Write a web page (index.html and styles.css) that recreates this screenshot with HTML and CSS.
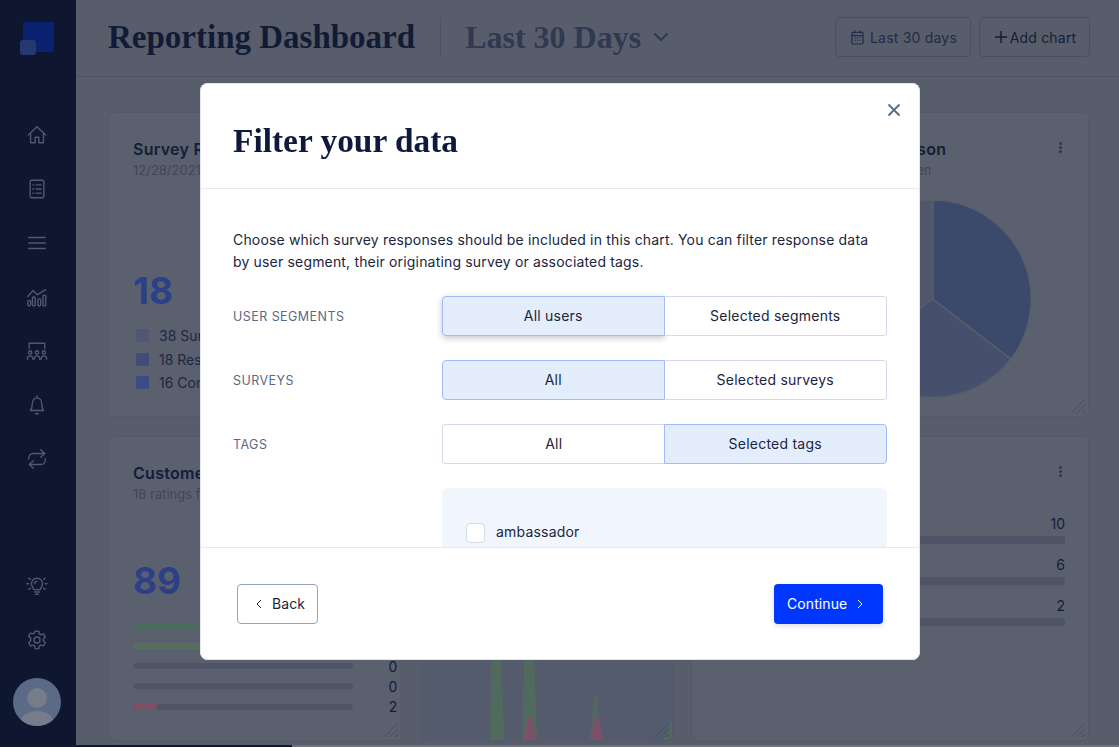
FILE: index.html
```html
<!DOCTYPE html>
<html lang="en">
<head>
  <meta charset="UTF-8" />
  <meta name="viewport" content="width=device-width, initial-scale=1.0" />
  <title>Reporting Dashboard</title>
  <link rel="stylesheet" href="styles.css">
</head>
<body>
  <div class="dashboard">
    <aside class="sidebar">
      <div class="logo"><span class="logo-big"></span><span class="logo-small"></span></div>
      <nav class="nav">
        <a href="#"><svg viewBox="0 0 24 24"><path d="M2.500 12 12 3l9.500 9M5 10v10.500h5v-6h4v6h5V10"/></svg></a>
        <a href="#"><svg viewBox="0 0 24 24"><rect x="4.500" y="2.500" width="15" height="19" rx="1.500"/><path d="M7.500 7.500h1M11 7.500h5.500M7.500 12h1M11 12h5.500M7.500 16.500h1M11 16.500h5.500"/></svg></a>
        <a href="#"><svg viewBox="0 0 24 24"><path d="M3 6h18M3 12h18M3 18h18"/></svg></a>
        <a href="#"><svg viewBox="0 0 24 24"><path d="M2 11.500 7.500 5l5 4.500L21.500 4"/><rect x="2" y="16" width="3" height="5.500" rx="1"/><rect x="7" y="12" width="3" height="9.500" rx="1"/><rect x="13" y="14" width="3" height="7.500" rx="1"/><rect x="18.500" y="10" width="3" height="11.500" rx="1"/></svg></a>
        <a href="#"><svg viewBox="0 0 24 24"><path d="M3.500 9V3.500h17V9"/><circle cx="4.500" cy="13.500" r="1.800"/><circle cx="12" cy="13.500" r="1.800"/><circle cx="19.500" cy="13.500" r="1.800"/><path d="M1.500 21c0-5 6-5 6 0M9 21c0-5 6-5 6 0M16.500 21c0-5 6-5 6 0"/></svg></a>
        <a href="#"><svg viewBox="0 0 24 24"><path d="M12 2v2M5 18c1.500-2 1.800-4 1.800-7 0-4 2.200-6.800 5.200-6.800s5.200 2.800 5.200 6.800c0 3 .3 5 1.800 7zM10.500 21.500h3"/></svg></a>
        <a href="#"><svg viewBox="0 0 24 24"><path d="M16 2l4.500 4L16 10M20 6H8a5 5 0 0 0-5 5v1M8 22l-4.500-4L8 14M4 18h12a5 5 0 0 0 5-5v-1"/></svg></a>
      </nav>
      <nav class="nav nav-bottom">
        <a href="#"><svg viewBox="0 0 24 24"><path d="M8.500 16c0-2-2.500-3-2.500-6.500a6 6 0 0 1 12 0C18 13 15.500 14 15.500 16zM9.500 18.500h5M10.500 21h3M9.500 9.500A2.500 2.500 0 0 1 12 7M1 9.500h2M21 9.500h2M3 3.500l1.800 1.200M21 3.500l-1.800 1.200M3 15.500l1.800-1.200M21 15.500l-1.800-1.200"/></svg></a>
        <a href="#"><svg viewBox="0 0 24 24"><circle cx="12" cy="12" r="3.300"/><path d="M10 2.500h4l.6 2.800 1.800 1 2.700-.9 2 3.400-2.100 1.900v2.400l2.100 1.900-2 3.400-2.700-.9-1.800 1-.6 2.900h-4l-.6-2.900-1.800-1-2.700.9-2-3.400 2.100-1.900V9.700L2.700 7.800l2-3.400 2.700.9 1.800-1z"/></svg></a>
      </nav>
      <div class="avatar"><span class="avatar-head"></span><span class="avatar-body"></span></div>
    </aside>

    <main class="main">
      <header class="topbar">
        <h1>Reporting Dashboard</h1>
        <div class="range-title">Last 30 Days <svg viewBox="0 0 16 10"><path d="M1.500 1.500 8 8l6.500-6.500"/></svg></div>
        <div class="top-actions">
          <button class="top-btn range-btn"><svg class="cal" viewBox="0 0 14 16"><rect x="1" y="2.500" width="12" height="12.500" rx="1.500"/><path d="M1 6h12M4 .5v3M10 .5v3M4 8.500h1M6.500 8.500h1M9 8.500h1M4 11h1M6.500 11h1M9 11h1"/></svg>Last 30 days</button>
          <button class="top-btn add-btn"><svg class="plus" viewBox="0 0 12 12"><path d="M6 0v12M0 6h12"/></svg>Add chart</button>
        </div>
      </header>

      <section class="cards">
        <div class="row row-top">
          <article class="card">
            <h3>Survey Responses</h3>
            <p class="sub">12/28/2021 - 1/27/2022</p>
            <div class="big big-18">18</div>
            <ul class="legend">
              <li><span class="sq sq-1"></span>38 Surveys sent</li>
              <li><span class="sq sq-2"></span>18 Responses</li>
              <li><span class="sq sq-3"></span>16 Completed</li>
            </ul>
            <span class="grip"></span>
          </article>
          <article class="card">
            <h3>Response Comparison</h3>
            <p class="sub">Responses by user chosen</p>
            <span class="kebab"></span>
            <svg class="pie" viewBox="0 0 200 200">
              <path class="slice-c" d="M100 100V1A99 99 0 0 0 19 157Z"/>
              <path class="slice-b" d="M100 100 178 160A99 99 0 0 1 19 157Z"/>
              <path class="slice-a" d="M100 100V1A99 99 0 0 1 178 160Z"/>
            </svg>
            <span class="grip"></span>
          </article>
        </div>
        <div class="row row-bottom">
          <article class="card">
            <h3>Customer Satisfaction</h3>
            <p class="sub">18 ratings from 16 users</p>
            <div class="big big-89">89</div>
            <div class="scores">
              <div class="score"><div class="track"><div class="fill fill-green" style="width:56%"></div></div><span>10</span></div>
              <div class="score"><div class="track"><div class="fill fill-olive" style="width:33%"></div></div><span>6</span></div>
              <div class="score"><div class="track"></div><span>0</span></div>
              <div class="score"><div class="track"></div><span>0</span></div>
              <div class="score"><div class="track"><div class="fill fill-red" style="width:11%"></div></div><span>2</span></div>
            </div>
            <span class="grip"></span>
          </article>
          <article class="card card-chart">
            <h3>Ratings over time</h3>
            <svg class="area" viewBox="0 0 253 305" preserveAspectRatio="none">
              <path class="peak-green" d="M69 305L71 224C73 150 74 100 76 100S79 150 81 224L84 305ZM102 305L104 224C106 150 107 100 109 100S112 150 114 224L117 305ZM169 305C173 295 174 257 176 257S179 295 184 305ZM244 305C247 300 249 295 253 282V305Z"/>
              <path class="peak-red" d="M102 305C106 300 106 281 110 281S114 300 118 305ZM169 305C173 300 173 281 177 281S181 300 185 305Z"/>
            </svg>
            <span class="grip"></span>
          </article>
          <article class="card card-tags">
            <h3>Top tags</h3>
            <p class="sub">18 responses</p>
            <span class="kebab"></span>
            <div class="tag-bars">
              <div class="tag-bar"><span>10</span><div class="tag-track"></div></div>
              <div class="tag-bar"><span>6</span><div class="tag-track"></div></div>
              <div class="tag-bar"><span>2</span><div class="tag-track"></div></div>
            </div>
            <span class="grip"></span>
          </article>
        </div>
      </section>
    </main>
  </div>
  <div class="scrollbar"><div class="scroll-thumb"></div></div>

  <div class="modal">
    <div class="modal-head">
      <h2>Filter your data</h2>
      <button class="close"><svg viewBox="0 0 14 14"><path d="M1.500 1.500l11 11M12.500 1.500l-11 11"/></svg></button>
    </div>
    <div class="modal-body">
      <p class="intro">Choose which survey responses should be included in this chart. You can filter response data by user segment, their originating survey or associated tags.</p>
      <div class="filter">
        <label>User segments</label>
        <div class="seg seg-shadow"><button class="active">All users</button><button>Selected segments</button></div>
      </div>
      <div class="filter">
        <label>Surveys</label>
        <div class="seg"><button class="active">All</button><button>Selected surveys</button></div>
      </div>
      <div class="filter">
        <label>Tags</label>
        <div class="seg seg-right"><button>All</button><button class="active">Selected tags</button></div>
      </div>
      <div class="tag-box">
        <div class="check"><span class="checkbox"></span><span class="check-label">ambassador</span></div>
      </div>
    </div>
    <div class="modal-foot">
      <button class="btn-back"><svg viewBox="0 0 6 10"><path d="M5 1 1 5l4 4"/></svg>Back</button>
      <button class="btn-next">Continue<svg viewBox="0 0 6 10"><path d="M1 1l4 4-4 4"/></svg></button>
    </div>
  </div>
</body>
</html>
```

FILE: styles.css
```css
* {
  box-sizing: border-box;
}
html, body {
  height: 100%;
}
body {
  margin: 0;
  font-family: Inter, 'Noto Sans', sans-serif;
  background-color: #575d6b;
  color: #141d38;
  overflow: hidden;
}
button {
  font-family: inherit;
}
.dashboard {
  display: flex;
  height: 745px;
}
.scrollbar {
  height: 2px;
  background-color: #6d727e;
}
.scroll-thumb {
  width: 292px;
  height: 2px;
  background-color: #12192c;
}

/* sidebar */
.sidebar {
  width: 76px;
  flex: none;
  padding-right: 2px;
  background-color: #0f1730;
  display: flex;
  flex-direction: column;
  align-items: center;
}
.logo {
  position: relative;
  width: 34px;
  height: 33px;
  margin-top: 22px;
}
.logo-big {
  position: absolute;
  top: 0;
  right: 0;
  width: 31px;
  height: 30px;
  border-radius: 2px;
  background-color: #0a2270;
}
.logo-small {
  position: absolute;
  left: 0;
  bottom: 0;
  width: 16px;
  height: 15px;
  border-radius: 3px;
  background-color: #25386f;
}
.nav {
  display: flex;
  flex-direction: column;
  margin-top: 53px;
}
.nav-bottom {
  margin-top: 73px;
}
.nav a {
  width: 24px;
  height: 54px;
  display: flex;
  align-items: center;
  justify-content: center;
}
.nav svg {
  width: 22px;
  height: 22px;
  fill: none;
  stroke: #51596e;
  stroke-width: 1.5;
  stroke-linecap: round;
  stroke-linejoin: round;
}
.avatar {
  position: relative;
  width: 48px;
  height: 48px;
  margin-top: 11px;
  border-radius: 50%;
  overflow: hidden;
  background-color: #5b6a87;
}
.avatar-head {
  position: absolute;
  left: 14px;
  top: 10px;
  width: 20px;
  height: 20px;
  border-radius: 50%;
  background-color: #767c89;
}
.avatar-body {
  position: absolute;
  left: 7px;
  top: 33px;
  width: 34px;
  height: 24px;
  border-radius: 50%;
  background-color: #767c89;
}

/* top bar */
.main {
  flex-grow: 1;
  min-width: 0;
}
.topbar {
  height: 77px;
  padding: 17px 29px 0 32px;
  border-bottom: 1px solid #4d5366;
  display: flex;
  align-items: flex-start;
}
.topbar h1 {
  margin: 0;
  padding-right: 25px;
  height: 40px;
  border-right: 1px solid #4d5366;
  font-family: 'Liberation Serif', serif;
  font-size: 33px;
  line-height: 40px;
  font-weight: bold;
  color: #121b36;
}
.range-title {
  margin-left: 24px;
  height: 40px;
  font-family: 'Liberation Serif', serif;
  font-size: 32px;
  line-height: 40px;
  font-weight: bold;
  color: #2f3950;
  display: flex;
  align-items: center;
}
.range-title svg {
  width: 16px;
  height: 10px;
  margin-left: 12px;
  fill: none;
  stroke: #2f3950;
  stroke-width: 2;
}
.top-actions {
  margin-left: auto;
  display: flex;
  gap: 8px;
}
.top-btn {
  height: 40px;
  padding: 0 0 0 2px;
  background: none;
  border: 1px solid #4a5063;
  border-radius: 4px;
  color: #232c47;
  font-size: 14px;
  letter-spacing: 0.2px;
  display: flex;
  align-items: center;
  justify-content: center;
}
.range-btn {
  width: 136px;
}
.add-btn {
  width: 111px;
  color: #141d38;
}
.cal {
  width: 13px;
  height: 15px;
  margin-right: 6px;
  fill: none;
  stroke: #232c47;
  stroke-width: 1.300;
}
.plus {
  width: 12px;
  height: 12px;
  margin-right: 3px;
  fill: none;
  stroke: #141d38;
  stroke-width: 1.500;
}

/* cards */
.cards {
  padding: 35px 30px 0 32px;
  display: flex;
  flex-direction: column;
  gap: 19px;
}
.row {
  display: grid;
  gap: 18px;
  height: 305px;
}
.row-top {
  grid-template-columns: 1fr 348px;
}
.row-bottom {
  grid-template-columns: 294px 253px 1fr;
}
.card {
  position: relative;
  background-color: #5a606e;
  border: 1px solid #535969;
  border-radius: 6px;
  padding: 26px 24px 0;
  overflow: hidden;
}
.card h3 {
  margin: 0;
  font-size: 16px;
  line-height: 20px;
  font-weight: 600;
  letter-spacing: 0.3px;
  color: #141d38;
}
.sub {
  margin: 2px 0 0;
  font-size: 13px;
  line-height: 18px;
  color: #3f475d;
}
.big {
  font-size: 37px;
  line-height: 44px;
  font-weight: 700;
  color: #2c4088;
}
.big-18 {
  margin-top: 90px;
}
.big-89 {
  margin-top: 56px;
}
.legend {
  list-style: none;
  margin: 11px 0 0 3px;
  padding: 0;
  font-size: 14px;
  line-height: 23.500px;
  color: #1d2742;
}
.legend li {
  display: flex;
  align-items: center;
}
.sq {
  width: 13px;
  height: 13px;
  margin-right: 10px;
}
.sq-1 {
  background-color: #4f5870;
}
.sq-2 {
  background-color: #414d74;
}
.sq-3 {
  background-color: #3b4c80;
}
.kebab {
  position: absolute;
  top: 29px;
  right: 26px;
  width: 3px;
  height: 3px;
  border-radius: 50%;
  background-color: #2e3650;
  box-shadow: 0 4px 0 #2e3650, 0 8px 0 #2e3650;
}
.grip {
  position: absolute;
  right: 3px;
  bottom: 3px;
  width: 15px;
  height: 15px;
  background: repeating-linear-gradient(135deg, transparent 0 3px, #4a5060 3px 4px);
  clip-path: polygon(100% 0, 100% 100%, 0 100%);
}
.pie {
  position: absolute;
  left: 91px;
  top: 86px;
  width: 200px;
  height: 200px;
}
.slice-a {
  fill: #3b496b;
  stroke: #585e6c;
  stroke-width: 1.500;
}
.slice-b {
  fill: #46506c;
  stroke: #585e6c;
  stroke-width: 1.500;
}
.slice-c {
  fill: #50576b;
  stroke: #585e6c;
  stroke-width: 1.500;
}
.scores {
  margin-top: 14px;
  display: flex;
  flex-direction: column;
  gap: 6px;
}
.score {
  display: grid;
  grid-template-columns: 220px 12px;
  column-gap: 34px;
  align-items: center;
  height: 14.300px;
  font-size: 14px;
  color: #141d38;
  text-align: center;
}
.track {
  height: 6px;
  border-radius: 3px;
  background-color: #4e5465;
  overflow: hidden;
}
.fill {
  height: 100%;
}
.fill-green {
  background-color: #4b6b5c;
}
.fill-olive {
  background-color: #566e5a;
}
.fill-red {
  background-color: #7c4f63;
}
.card-chart {
  background-color: #545b6d;
  padding: 0;
}
.card-chart h3 {
  padding: 26px 24px 0;
}
.area {
  position: absolute;
  left: 0;
  top: 0;
  width: 100%;
  height: 100%;
}
.peak-green {
  fill: #506b5e;
}
.peak-red {
  fill: #7a5268;
}
.card-tags {
  padding-right: 23px;
}
.tag-bars {
  margin-top: 9px;
  display: flex;
  flex-direction: column;
  gap: 9px;
}
.tag-bar {
  text-align: right;
  font-size: 14px;
  line-height: 24px;
  color: #141d38;
}
.tag-track {
  height: 8px;
  border-radius: 2px;
  background-color: #4e5465;
}

/* modal */
.modal {
  position: fixed;
  left: 200px;
  top: 83px;
  width: 720px;
  height: 577px;
  background-color: #fff;
  border-radius: 8px;
  box-shadow: inset 0 0 0 1px #e1e4ea;
  display: flex;
  flex-direction: column;
  overflow: hidden;
}
.modal-head {
  position: relative;
  height: 106px;
  flex: none;
  padding: 37px 33px 0;
  border-bottom: 1px solid #e3e8f0;
}
.modal-head h2 {
  margin: 0;
  font-family: 'Liberation Serif', serif;
  font-size: 33.400px;
  line-height: 42px;
  font-weight: bold;
  color: #0e1a3c;
}
.close {
  position: absolute;
  top: 20px;
  right: 19px;
  width: 14px;
  height: 14px;
  padding: 0;
  background: none;
  border: 0;
}
.close svg {
  display: block;
  width: 14px;
  height: 14px;
  fill: none;
  stroke: #566a88;
  stroke-width: 1.800;
}
.modal-body {
  flex-grow: 1;
  min-height: 0;
  overflow: hidden;
  padding: 40px 33px 0;
}
.intro {
  margin: 0 0 23px;
  font-size: 14px;
  line-height: 22px;
  letter-spacing: 0.17px;
  color: #1b2540;
}
.filter {
  display: grid;
  grid-template-columns: 209px 1fr;
  align-items: center;
  margin-bottom: 24px;
}
.filter label {
  font-size: 12.500px;
  letter-spacing: 0.45px;
  text-transform: uppercase;
  color: #5a6a85;
}
.seg {
  display: grid;
  grid-template-columns: 1fr 1fr;
  height: 40px;
}
.seg button {
  padding: 0 0 2px;
  background-color: #fff;
  border: 1px solid #d3dbe8;
  font-size: 14px;
  letter-spacing: 0.23px;
  color: #1b2540;
}
.seg button:first-child {
  border-radius: 4px 0 0 4px;
  border-right: 0;
}
.seg button:last-child {
  border-radius: 0 4px 4px 0;
  border-left: 0;
}
.seg button.active {
  background-color: #e3edfb;
  border: 1px solid #a3bcf7;
}
.seg-right button.active {
  margin-left: -1px;
}
.seg-shadow button.active {
  box-shadow: 0 2px 6px rgba(20, 30, 60, 0.25);
}
.tag-box {
  height: 120px;
  margin-left: 209px;
  padding: 35px 24px 0;
  border-radius: 6px;
  background-color: #f1f5fd;
}
.check {
  display: flex;
  align-items: center;
  font-size: 14px;
  line-height: 20px;
  letter-spacing: 0.2px;
  color: #1b2540;
}
.check-label {
  margin-top: -2px;
}
.checkbox {
  width: 19px;
  height: 20px;
  margin-right: 11px;
  background-color: #fff;
  border: 1px solid #d3dbe8;
  border-radius: 4px;
}
.modal-foot {
  height: 113px;
  flex: none;
  padding: 36px 37px 0;
  border-top: 1px solid #e3e8f0;
  display: flex;
  justify-content: space-between;
  align-items: flex-start;
}
.modal-foot button {
  height: 40px;
  padding-bottom: 2px;
  border-radius: 4px;
  font-size: 14px;
  letter-spacing: 0.1px;
  display: flex;
  align-items: center;
}
.modal-foot svg {
  width: 6px;
  height: 10px;
  fill: none;
  stroke-width: 1;
}
.btn-back {
  width: 81px;
  padding-left: 18px;
  padding-right: 0;
  background-color: #fff;
  border: 1px solid #96a3b8;
  color: #1b2540;
}
.btn-back svg {
  margin-right: 10px;
  stroke: #1b2540;
}
.btn-next {
  width: 109px;
  padding-left: 13px;
  padding-right: 0;
  background-color: #0037ff;
  border: 0;
  color: #fff;
  box-shadow: 0 2px 5px rgba(0, 40, 120, 0.15);
}
.btn-next svg {
  margin-left: 10px;
  stroke: #fff;
}
```
